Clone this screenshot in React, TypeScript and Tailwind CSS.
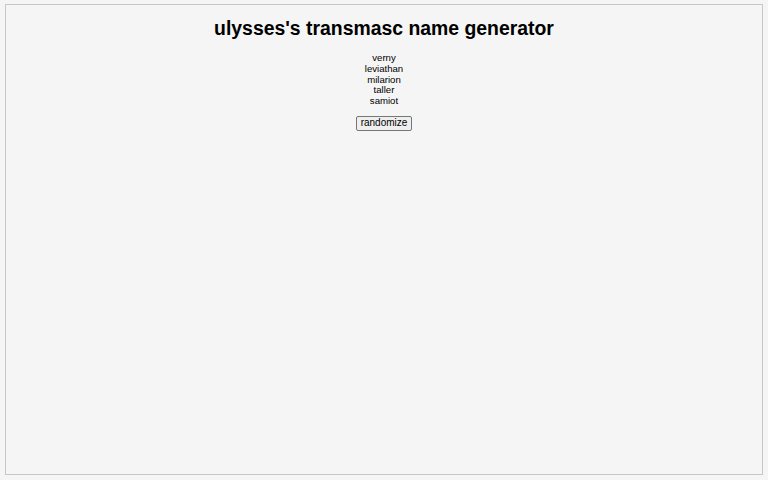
import { useState } from "react";

const POOL = ["verny", "leviathan", "milarion", "taller", "samiot"];

export default function App() {
  const [names, setNames] = useState<string[]>(POOL);

  const shuffle = () => {
    setNames([...POOL].sort(() => Math.random() - 0.5));
  };

  return (
    <div className="w-[768px] h-[480px] bg-[#f5f5f5] px-[5px] pt-[4px] font-['Liberation_Sans',Arial,sans-serif] text-black">
      <div className="h-[471px] border border-[#c8c8c8] flex flex-col items-center">
        <h1 className="mt-[12px] text-[19.4px] leading-[22px] font-bold">ulysses's transmasc name generator</h1>
        <div className="mt-[14px] flex flex-col items-center text-[9.6px] leading-[10.75px]">
          {names.map((n) => (
            <div key={n}>{n}</div>
          ))}
        </div>
        <button
          onClick={shuffle}
          className="mt-[9px] h-[15px] px-[4px] text-[10px] leading-[12px] border border-[#767676] rounded-[2px] bg-[#efefef]"
        >
          randomize
        </button>
      </div>
    </div>
  );
}
